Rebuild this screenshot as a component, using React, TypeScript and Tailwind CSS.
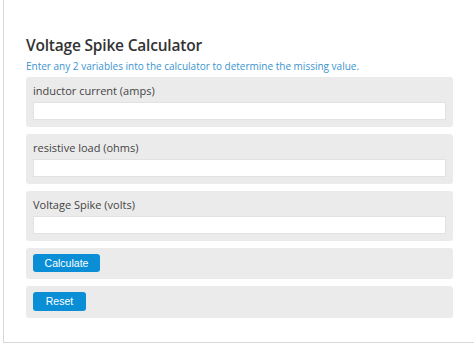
export default function App() {
  const fields = ['inductor current (amps)', 'resistive load (ohms)', 'Voltage Spike (volts)'];

  return (
    <div className="w-[474px] h-[348px] bg-white pl-[3px] pb-[5px]">
      <div
        className="h-full border-l border-b border-[#d8d8d8] pl-[22px] pr-[21px] pt-[33px]"
        style={{ fontFamily: '"Open Sans", sans-serif' }}
      >
        <h1 className="text-[15.5px] leading-[24px] font-semibold text-[#333333] tracking-[-0.2px]">
          Voltage Spike Calculator
        </h1>
        <p className="text-[10px] leading-[14px] text-[#3b94d0] mt-[2px] mb-[4px]">
          Enter any 2 variables into the calculator to determine the missing value.
        </p>
        <div className="flex flex-col gap-[7px]">
          {fields.map((f) => (
            <div key={f} className="bg-[#ebebeb] rounded-[3px] px-[7px] pt-[6px] pb-[7px]">
              <label className="block text-[11px] leading-[16px] text-[#444444] mb-[3px]">{f}</label>
              <input
                type="text"
                className="block w-full h-[18px] bg-white border border-[#e2e2e2] outline-none"
              />
            </div>
          ))}
          <div className="flex bg-[#ebebeb] rounded-[3px] px-[7px] pt-[6px] pb-[7px]">
            <button
              className="h-[18px] w-[67px] rounded-[3px] bg-[#0a8fd6] text-white text-[10.5px] leading-[18px]"
              style={{ fontFamily: '"Liberation Sans", Arial, sans-serif' }}
            >
              Calculate
            </button>
          </div>
          <div className="flex bg-[#ebebeb] rounded-[3px] px-[7px] pt-[6px] pb-[7px]">
            <button
              className="h-[19px] w-[53px] rounded-[3px] bg-[#0a8fd6] text-white text-[10.5px] leading-[19px]"
              style={{ fontFamily: '"Liberation Sans", Arial, sans-serif' }}
            >
              Reset
            </button>
          </div>
        </div>
      </div>
    </div>
  );
}
